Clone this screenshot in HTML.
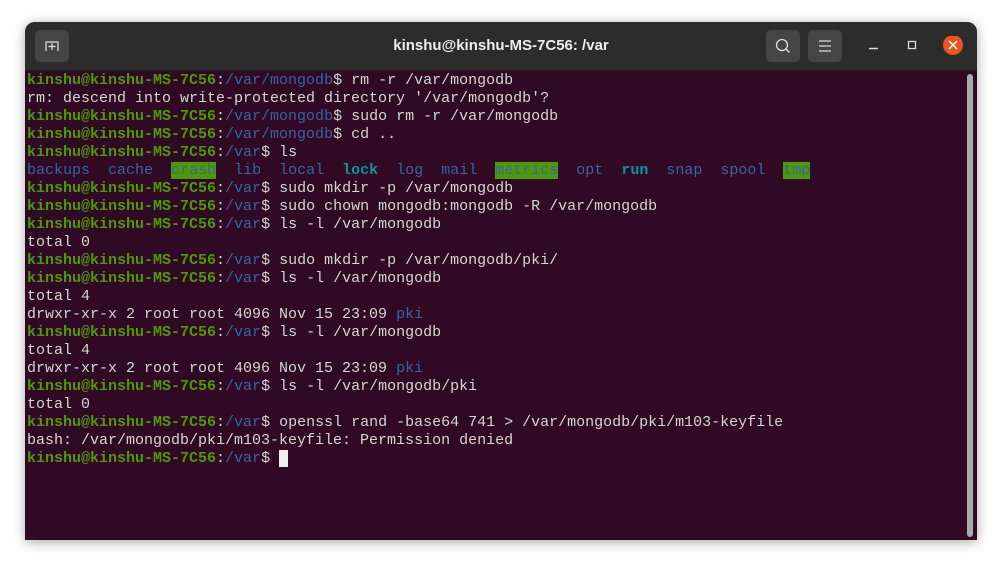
<!DOCTYPE html>
<html><head><style>
body{margin:0;width:1002px;height:569px;background:#fff;position:relative;overflow:hidden;font-family:"Liberation Sans",sans-serif}
.win{position:absolute;left:25px;top:22px;width:952px;height:518px;background:#300a24;border-radius:10px 10px 0 0;overflow:hidden;box-shadow:0 2px 12px rgba(0,0,0,.35)}
.tb{position:absolute;left:0;top:0;width:952px;height:48px;background:#2c2c2c;border-bottom:1px solid #1e1e1e}
.btn{position:absolute;top:8px;width:34px;height:32px;background:#454545;border-radius:5px}
.title{position:absolute;left:0;width:952px;top:15px;text-align:center;color:#eee;font-weight:bold;font-size:15px}
pre{position:absolute;left:2px;top:50px;margin:0;font-family:"Liberation Mono",monospace;font-size:15px;line-height:18px;color:#d3d7cf}
.g{color:#4e9a06;font-weight:bold}.b{color:#3465a4}
.h{background:#4e9a06;color:#3465a4}.t{color:#06989a;font-weight:bold}
.sb{position:absolute;left:942px;top:52px;width:6px;height:463px;background:#aaa;border-radius:3px}
.cur{background:#eee;color:#300a24}
</style></head><body>
<div class="win">
<div class="tb">
<div class="btn" style="left:10px"><svg width="34" height="32"><path d="M11 21V12h12v9" stroke="#ddd" fill="none" stroke-width="1.2"/><path d="M17 13v7M13.5 16.5h7" stroke="#ddd" stroke-width="1.2"/></svg></div>
<div class="title">kinshu@kinshu-MS-7C56: /var</div>
<div class="btn" style="left:741px"><svg width="34" height="32"><circle cx="16" cy="15" r="5.5" stroke="#ddd" fill="none" stroke-width="1.3"/><path d="M20 19l3.5 3.5" stroke="#ddd" stroke-width="1.5"/></svg></div>
<div class="btn" style="left:783px"><svg width="34" height="32"><path d="M11 11h12M11 16h12M11 21h12" stroke="#ddd" stroke-width="1.2"/></svg></div>
<svg style="position:absolute;left:840px;top:14px" width="100" height="22"><path d="M4 12.5h9" stroke="#ddd" stroke-width="1.5"/><rect x="43.5" y="5.5" width="7" height="7" stroke="#ddd" fill="none" stroke-width="1.3"/><circle cx="88" cy="9" r="10" fill="#e95420"/><path d="M84 5l8 8M92 5l-8 8" stroke="#fff" stroke-width="1.5"/></svg>
</div>
<pre><span class="g">kinshu@kinshu-MS-7C56</span>:<span class="b">/var/mongodb</span>$ rm -r /var/mongodb
rm: descend into write-protected directory '/var/mongodb'?
<span class="g">kinshu@kinshu-MS-7C56</span>:<span class="b">/var/mongodb</span>$ sudo rm -r /var/mongodb
<span class="g">kinshu@kinshu-MS-7C56</span>:<span class="b">/var/mongodb</span>$ cd ..
<span class="g">kinshu@kinshu-MS-7C56</span>:<span class="b">/var</span>$ ls
<span class="b">backups</span>  <span class="b">cache</span>  <span class="h">crash</span>  <span class="b">lib</span>  <span class="b">local</span>  <span class="t">lock</span>  <span class="b">log</span>  <span class="b">mail</span>  <span class="h">metrics</span>  <span class="b">opt</span>  <span class="t">run</span>  <span class="b">snap</span>  <span class="b">spool</span>  <span class="h">tmp</span>
<span class="g">kinshu@kinshu-MS-7C56</span>:<span class="b">/var</span>$ sudo mkdir -p /var/mongodb
<span class="g">kinshu@kinshu-MS-7C56</span>:<span class="b">/var</span>$ sudo chown mongodb:mongodb -R /var/mongodb
<span class="g">kinshu@kinshu-MS-7C56</span>:<span class="b">/var</span>$ ls -l /var/mongodb
total 0
<span class="g">kinshu@kinshu-MS-7C56</span>:<span class="b">/var</span>$ sudo mkdir -p /var/mongodb/pki/
<span class="g">kinshu@kinshu-MS-7C56</span>:<span class="b">/var</span>$ ls -l /var/mongodb
total 4
drwxr-xr-x 2 root root 4096 Nov 15 23:09 <span class="b">pki</span>
<span class="g">kinshu@kinshu-MS-7C56</span>:<span class="b">/var</span>$ ls -l /var/mongodb
total 4
drwxr-xr-x 2 root root 4096 Nov 15 23:09 <span class="b">pki</span>
<span class="g">kinshu@kinshu-MS-7C56</span>:<span class="b">/var</span>$ ls -l /var/mongodb/pki
total 0
<span class="g">kinshu@kinshu-MS-7C56</span>:<span class="b">/var</span>$ openssl rand -base64 741 > /var/mongodb/pki/m103-keyfile
bash: /var/mongodb/pki/m103-keyfile: Permission denied
<span class="g">kinshu@kinshu-MS-7C56</span>:<span class="b">/var</span>$ <span class="cur"> </span></pre>
<div class="sb"></div>
</div>
</body></html>
